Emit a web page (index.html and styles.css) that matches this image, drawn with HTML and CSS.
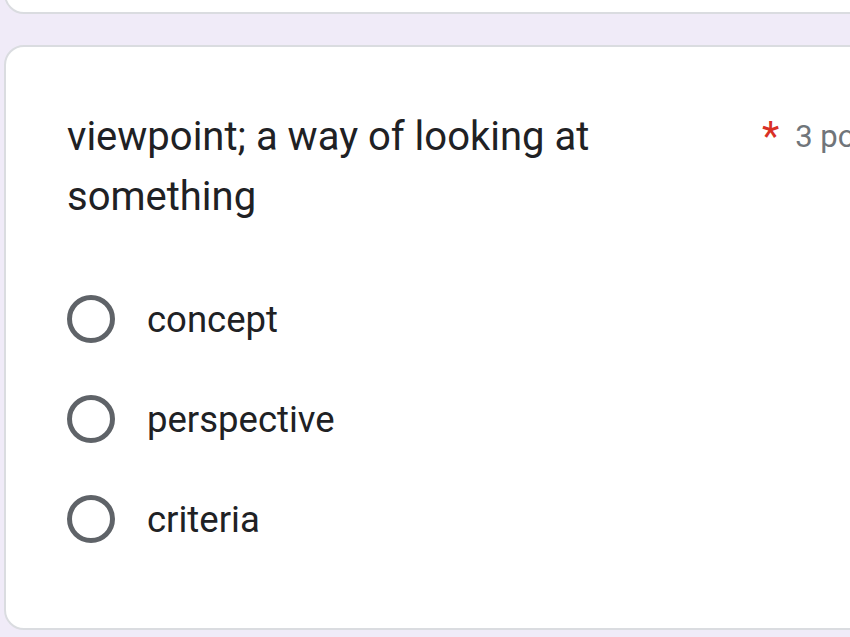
FILE: index.html
```html
<!DOCTYPE html>
<html lang="en">
<head>
    <meta charset="UTF-8">
    <meta name="viewport" content="width=device-width, initial-scale=1.0">
    <title>Quiz</title>
    <link rel="stylesheet" href="styles.css">
</head>
<body>
    <div class="card card-prev"></div>
    <div class="card question">
        <div class="question-head">
            <div class="question-title">viewpoint; a way of looking at something</div>
            <span class="required">*</span>
            <span class="points">3 points</span>
        </div>
        <div class="options">
            <label class="option">
                <span class="radio"></span>
                <span class="option-text">concept</span>
            </label>
            <label class="option">
                <span class="radio"></span>
                <span class="option-text">perspective</span>
            </label>
            <label class="option">
                <span class="radio"></span>
                <span class="option-text">criteria</span>
            </label>
        </div>
    </div>
</body>
</html>
```

FILE: styles.css
```css
body {
    font-family: Roboto, "Liberation Sans", Arial, sans-serif;
    background-color: #f0ebf8;
    margin: 0;
    overflow: hidden;
    color: #202124;
}
.card {
    background-color: white;
    border: 2px solid #dadce0;
    border-radius: 20px;
    width: 1000px;
    margin-left: 4px;
}
.card-prev {
    height: 40px;
    margin-top: -30px;
}
.question {
    margin-top: 31px;
    padding: 60px 0 59px 61px;
}
.question-head {
    display: flex;
    align-items: flex-start;
}
.question-title {
    width: 690px;
    font-size: 40px;
    line-height: 60px;
}
.required {
    color: #d93025;
    font-size: 40px;
    line-height: 60px;
    margin-left: 5px;
}
.points {
    color: #70757a;
    font-size: 31px;
    line-height: 60px;
    margin-left: 16px;
}
.options {
    margin-top: 42px;
}
.option {
    display: flex;
    align-items: center;
    height: 100px;
}
.radio {
    width: 48px;
    height: 48px;
    box-sizing: border-box;
    border: 5px solid #5f6368;
    border-radius: 50%;
    margin-right: 32px;
}
.option-text {
    font-size: 36.5px;
}
```
